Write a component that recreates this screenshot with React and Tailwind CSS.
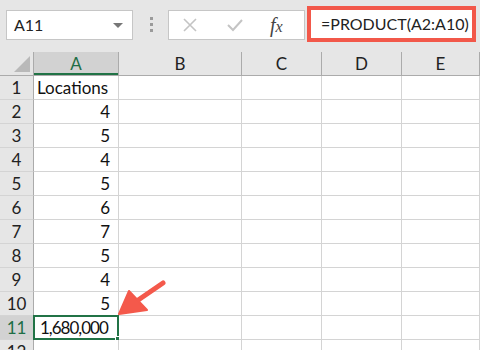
import React from "react";

const cols = [
  { id: "A", w: "w-[85px]" },
  { id: "B", w: "w-[123px]" },
  { id: "C", w: "w-[80px]" },
  { id: "D", w: "w-[80px]" },
  { id: "E", w: "flex-1" },
];

const values = ["Locations", "4", "5", "4", "5", "6", "7", "5", "4", "5", "1,680,000"];

const font = { fontFamily: "Lato, 'Open Sans', sans-serif" };

function TopBar() {
  return (
    <div className="flex h-[52px] items-start bg-[#e6e6e6] pt-[10px]">
      {/* name box */}
      <div className="ml-[6px] flex h-[30px] w-[127px] items-center justify-between border border-[#c6c6c6] bg-white pl-[7px] pr-[9px]">
        <span className="text-[16px] text-[#222]">A11</span>
        <span className="h-0 w-0 border-x-[5px] border-t-[5px] border-x-transparent border-t-[#777]" />
      </div>
      {/* grip dots */}
      <div className="ml-[17px] mt-[7px] flex flex-col gap-[3px]">
        <span className="h-[3px] w-[3px] bg-[#9a9a9a]" />
        <span className="h-[3px] w-[3px] bg-[#9a9a9a]" />
        <span className="h-[3px] w-[3px] bg-[#9a9a9a]" />
      </div>
      {/* cancel / enter / fx */}
      <div className="ml-[15px] flex h-[30px] w-[137px] items-center border border-[#c6c6c6] bg-white">
        <svg className="ml-[13px]" width="16" height="16" viewBox="0 0 16 16">
          <path d="M2 2 L14 14 M14 2 L2 14" stroke="#c4c4c4" strokeWidth="1.6" fill="none" />
        </svg>
        <svg className="ml-[28px]" width="18" height="16" viewBox="0 0 18 16">
          <path d="M2 8 L7 13 L16 3" stroke="#c4c4c4" strokeWidth="2" fill="none" />
        </svg>
        <span
          className="ml-[26px] text-[20px] italic text-[#444]"
          style={{ fontFamily: "'Liberation Serif', serif" }}
        >
          f<span className="text-[16px]">x</span>
        </span>
      </div>
      {/* formula bar */}
      <div className="-mt-[4px] ml-[2px] mr-[4px] flex h-[36px] flex-1 items-center border-[4px] border-[#f2584a] bg-white pl-[10px]">
        <span className="text-[16px] text-[#222]">=PRODUCT(A2:A10)</span>
      </div>
    </div>
  );
}

function HeaderRow() {
  return (
    <div className="flex h-[24px] border-b border-[#ababab] bg-[#e6e6e6]">
      <div className="relative w-[34px] border-r border-[#ababab]">
        <span className="absolute bottom-[3px] right-[3px] h-0 w-0 border-b-[16px] border-l-[16px] border-b-[#b9b9b9] border-l-transparent" />
      </div>
      {cols.map((c) => (
        <div
          key={c.id}
          className={`${c.w} flex items-center justify-center text-[17px] ${
            c.id === "A"
              ? "border-r border-r-[#ababab] bg-[#d2d2d2] text-[#1e6e45] shadow-[inset_0_-2px_0_#217346]"
              : "border-r border-r-[#ababab] text-[#222]"
          }`}
        >
          {c.id}
        </div>
      ))}
    </div>
  );
}

function Row({ n, value }) {
  const selected = n === 11;
  return (
    <div className="flex h-[24px]">
      <div
        className={`flex w-[34px] items-center justify-center border-b border-r border-b-[#d4d4d4] border-r-[#ababab] text-[17px] ${
          selected ? "bg-[#d2d2d2] text-[#1e6e45]" : "bg-[#e6e6e6] text-[#222]"
        }`}
      >
        {n}
      </div>
      {cols.map((c) => (
        <div
          key={c.id}
          className={`${c.w} relative flex items-center border-b border-r border-[#d4d4d4] bg-white px-[3px] text-[17px] text-[#111] ${
            c.id === "A" && n > 1 && !selected ? "justify-end pr-[8px]" : ""
          } ${c.id === "A" && selected ? "pl-[6px] tracking-[-1px]" : ""}`}
        >
          {c.id === "A" ? value : ""}
          {c.id === "A" && selected && (
            <>
              <span className="absolute -left-px -top-px bottom-[-1px] right-[-1px] border-2 border-[#217346]" />
              <span className="absolute -bottom-[4px] -right-[4px] h-[7px] w-[7px] border border-white bg-[#217346]" />
            </>
          )}
        </div>
      ))}
    </div>
  );
}

export default function App() {
  return (
    <div className="relative h-[350px] w-[480px] overflow-hidden bg-white" style={font}>
      <TopBar />
      <HeaderRow />
      {values.map((v, i) => (
        <Row key={i} n={i + 1} value={v} />
      ))}
      <Row n={12} value="" />
      {/* callout arrow */}
      <svg className="absolute left-0 top-0" width="480" height="350" viewBox="0 0 480 350">
        <path d="M163 283 L128 307" stroke="#f4594b" strokeWidth="5" strokeLinecap="round" fill="none" />
        <path d="M119 314 L129 291 L147 310 Z" fill="#f4594b" stroke="#f4594b" strokeWidth="2" strokeLinejoin="round" />
      </svg>
    </div>
  );
}
